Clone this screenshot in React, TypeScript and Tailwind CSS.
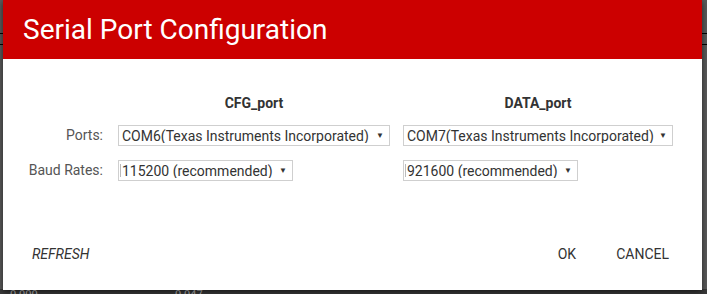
import React from 'react';

function Select({ value, width, tick }: { value: string; width: string; tick?: boolean }) {
  return (
    <div
      className={`flex h-[21px] items-center border border-[#cfcfcf] bg-white pr-[5px] text-[14px] text-[#333] ${tick ? 'pl-0' : 'pl-[3px]'} ${width}`}
    >
      {tick && <span className="ml-[1px] mr-[1px] h-[13px] w-px bg-[#bbb]" />}
      <span className="flex-1 truncate leading-none">{value}</span>
      <span className="ml-[4px] text-[8px] leading-none">▼</span>
    </div>
  );
}

export default function App() {
  return (
    <div
      className="relative h-[294px] w-[707px] overflow-hidden bg-[#5a5a5a]"
      style={{ fontFamily: 'Roboto, "Liberation Sans", sans-serif' }}
    >
      {/* page behind the dialog */}
      <div className="absolute left-0 top-[33px] h-px w-full bg-black" />
      <div className="absolute left-0 top-[44px] h-px w-full bg-black" />
      <div className="absolute bottom-0 left-0 h-[5px] w-full bg-[#3a3a3a]">
        <span className="absolute left-[10px] top-0 text-[11px] leading-none text-[#bbb]">0.000</span>
        <span className="absolute left-[175px] top-0 text-[11px] leading-none text-[#bbb]">0.047</span>
      </div>

      {/* dialog */}
      <div className="absolute left-[3px] top-0 flex h-[290px] w-[699px] flex-col bg-white shadow-[0_2px_6px_rgba(0,0,0,0.6)]">
        <div className="flex h-[59px] items-center bg-[#cc0000] pl-[20px]">
          <h1 className="text-[28px] font-normal leading-none text-white">Serial Port Configuration</h1>
        </div>

        <div className="grid grid-cols-[115px_285px_1fr] pt-[34px] text-[14px]">
          <div />
          <div className="h-[20px] w-[272px] text-center font-bold leading-[20px] text-[#333]">CFG_port</div>
          <div className="h-[20px] w-[270px] text-center font-bold leading-[20px] text-[#333]">DATA_port</div>

          <div className="mt-[12px] flex h-[21px] items-center justify-end pr-[15px] text-[#555]">Ports:</div>
          <div className="mt-[12px]">
            <Select value="COM6(Texas Instruments Incorporated)" width="w-[272px]" />
          </div>
          <div className="mt-[12px]">
            <Select value="COM7(Texas Instruments Incorporated)" width="w-[270px]" />
          </div>

          <div className="mt-[14px] flex h-[21px] items-center justify-end pr-[15px] text-[#555]">Baud Rates:</div>
          <div className="mt-[14px]">
            <Select value="115200 (recommended)" width="w-[175px]" tick />
          </div>
          <div className="mt-[14px]">
            <Select value="921600 (recommended)" width="w-[175px]" tick />
          </div>
        </div>

        <div className="mt-auto flex h-[58px] items-center pb-[14px] pl-[29px] pr-[33px] text-[14px] text-[#333]">
          <button className="italic">REFRESH</button>
          <div className="flex-1" />
          <button className="mr-[40px]">OK</button>
          <button>CANCEL</button>
        </div>
      </div>
    </div>
  );
}
